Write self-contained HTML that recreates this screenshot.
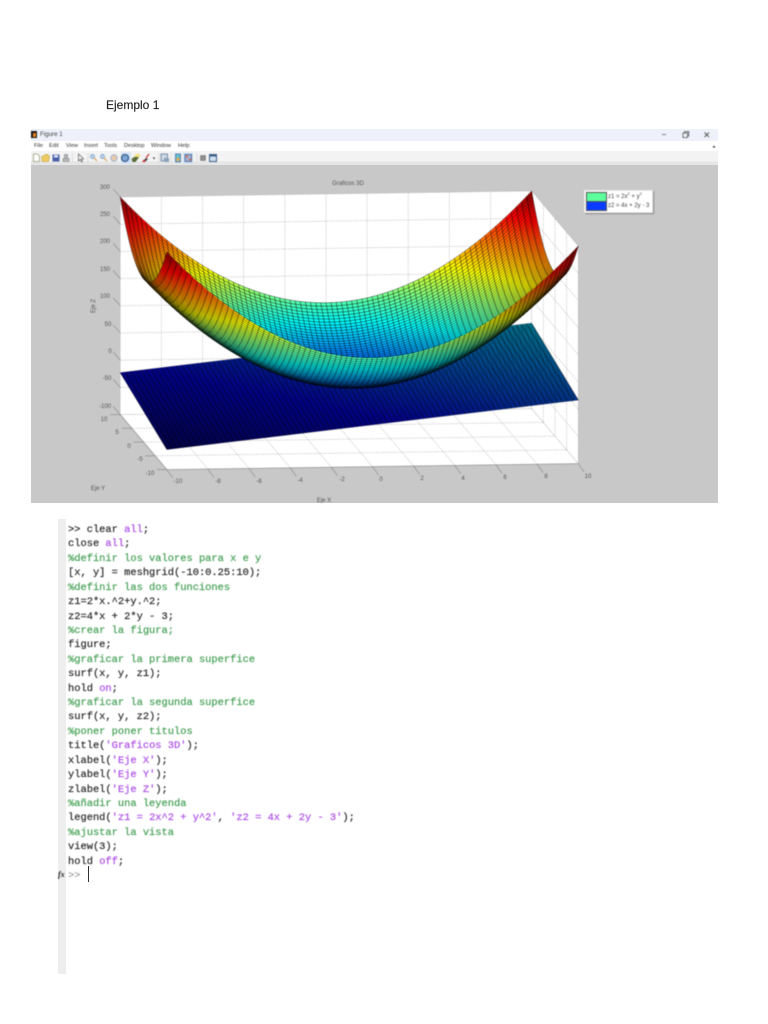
<!DOCTYPE html>
<html lang="es"><head><meta charset="utf-8"><title>Ejemplo 1</title>
<style>
html,body{margin:0;padding:0;background:#fff;width:768px;height:1024px;overflow:hidden}
body{position:relative;font-family:"Liberation Sans",sans-serif}
.a{position:absolute;white-space:pre}
#h{left:106px;top:98px;font-size:12px;line-height:15px;color:#222;-webkit-text-stroke:.15px #222}
#fig{position:absolute;left:31px;top:129px;width:687px;height:374px;background:#c8c8c8;overflow:hidden}
#tb{position:absolute;left:0;top:0;width:687px;height:12px;background:#eef1fa}
#mb{position:absolute;left:0;top:12px;width:687px;height:10px;background:#fff}
#too{position:absolute;left:0;top:22px;width:687px;height:14px;background:linear-gradient(#f3f3f3 0,#f3f3f3 75%,#e6e6e6 75%)}
#cv{position:absolute;left:0;top:0;width:768px;height:1024px;filter:blur(.4px)}
#over{position:absolute;left:0;top:0;width:768px;height:1024px;filter:blur(.5px)}
.m{font-size:5.6px;line-height:8px;color:#333;top:142px}
.t{font-size:6px;line-height:8px;color:#555;transform:translate(-50%,-50%)}
#leg{position:absolute;left:584px;top:190px;width:67px;height:21px;background:#fff;border:1px solid #e8e8e8;box-shadow:1px 1px 1px #888}
#code{position:absolute;left:68px;top:523px;font:10.4px/14.42px "Liberation Mono",monospace;color:#2a2a2a;white-space:pre;filter:blur(.45px);-webkit-text-stroke:.2px currentColor}
#code i{font-style:normal;color:#45a056}
#code b{font-weight:normal;color:#ac4ee4}
#bar{position:absolute;left:58px;top:519px;width:8px;height:455px;background:#eeeeee}
#cur{position:absolute;left:87.5px;top:866px;width:1.5px;height:16px;background:#333}
</style></head><body>
<div id="h" class="a">Ejemplo 1</div>
<div id="fig"><div id="tb"></div><div id="mb"></div><div id="too"></div></div>
<canvas id="cv" width="1536" height="2048"></canvas>
<div id="over">
<svg style="position:absolute;left:0;top:0" width="768" height="200">
<rect x="31" y="131" width="6" height="7" fill="#1a1a1a"/><rect x="33" y="133" width="3" height="4" fill="#e8801a"/>
<path d="M662 134.500h4" stroke="#666" stroke-width=".8"/>
<path d="M683 133h4.500v4.500h-4.500zM684.500 133v-1.300h4.300v4.300h-1.300" fill="none" stroke="#555" stroke-width=".8"/>
<path d="M704.500 132.500l4.500 4.500M709 132.500l-4.500 4.500" stroke="#555" stroke-width=".9"/>
<path d="M712.500 147.500h3l-1.500-2z" fill="#333"/>
<!-- toolbar -->
<rect x="121" y="152.500" width="10" height="11" fill="#cfe3f5"/><rect x="183" y="152.500" width="10" height="11" fill="#cfe3f5"/><rect x="173.500" y="152.500" width="9" height="11" fill="#e6eef5"/>
<path d="M33.500 154h4l2 2v5.500h-6z" fill="#fff" stroke="#9a9a7a" stroke-width=".8"/>
<path d="M42 156h2l1-1.500h3v1.500h1.500l-1 5.500H42z" fill="#f0cc60" stroke="#b8953a" stroke-width=".6"/>
<rect x="52.500" y="154.500" width="7" height="7" fill="#4a5fa8"/><rect x="54" y="155" width="4" height="2.500" fill="#dfe6f7"/>
<path d="M63 158.500h6v3h-6zM64.500 158.500v-4h3v4" fill="#b9bdc0" stroke="#777" stroke-width=".6"/>
<path d="M78.500 154v7l1.700-1.600 1.300 2.600 1-.5-1.200-2.500h2.200z" fill="#fff" stroke="#444" stroke-width=".6"/>
<path d="M72.500 153v10M88 153v10M159 153v10M171 153v10M197 153v10" stroke="#d6d6d6" stroke-width=".8"/>
<circle cx="92.500" cy="156.500" r="2" fill="#bcd4ec" stroke="#6b90bb" stroke-width=".7"/><path d="M94 158l3 3" stroke="#d9a24a" stroke-width="1.200"/>
<circle cx="102.500" cy="156.500" r="2" fill="#bcd4ec" stroke="#6b90bb" stroke-width=".7"/><path d="M104 158l3 3" stroke="#d9a24a" stroke-width="1.200"/>
<circle cx="114" cy="158" r="3.200" fill="#eac9a8" stroke="#9db4d2" stroke-width="1"/>
<circle cx="125" cy="158" r="3.500" fill="#7fa8d5" stroke="#2c4f80" stroke-width="1.100"/>
<path d="M131.500 159l4-3h3v2l-3 4h-3z" fill="#5b6a3a"/><rect x="135" y="154" width="5" height="3" fill="#f2e27d"/>
<path d="M142 162l4-4 2 1-3 3z" fill="#444"/><path d="M146 158l3-4" stroke="#c33" stroke-width="1.200"/><circle cx="144" cy="161" r="1.200" fill="#d33"/>
<path d="M152.500 157.500h3l-1.500 2z" fill="#555"/>
<rect x="161" y="154" width="6.500" height="7" fill="#cfd8e4" stroke="#5d7997" stroke-width=".8"/><rect x="164" y="158" width="5" height="4" fill="#8ba0b8"/>
<rect x="175.500" y="154" width="5" height="8" fill="#5fc0d0" stroke="#5b6f9c" stroke-width=".8"/><rect x="176.500" y="158" width="3" height="3" fill="#eba94e"/>
<rect x="185" y="154.500" width="6.500" height="7" fill="#9fb3d6" stroke="#43598c" stroke-width=".8"/><rect x="186" y="155.500" width="2" height="2" fill="#e06b5b"/><rect x="189" y="158.500" width="2" height="2" fill="#e06b5b"/>
<rect x="200.500" y="155.500" width="5" height="5" fill="#8f8f8f" stroke="#666" stroke-width=".5"/>
<rect x="209.500" y="154.500" width="7" height="7" fill="#cfe0f0" stroke="#3e5f8a" stroke-width="1"/><rect x="209.500" y="154.500" width="7" height="2" fill="#3e5f8a"/>
</svg>
<div class="a" style="left:40px;top:131px;font-size:6.2px;line-height:8px;color:#444">Figure 1</div>
<div class="a m" style="left:34px">File</div><div class="a m" style="left:49px">Edit</div><div class="a m" style="left:66px">View</div><div class="a m" style="left:84px">Insert</div><div class="a m" style="left:104px">Tools</div><div class="a m" style="left:124px">Desktop</div><div class="a m" style="left:151px">Window</div><div class="a m" style="left:178px">Help</div>
<div class="a t" style="left:348px;top:184px">Graficos 3D</div>
<div class="a t" style="left:105px;top:188px">300</div><div class="a t" style="left:105px;top:215px">250</div><div class="a t" style="left:105px;top:242px">200</div><div class="a t" style="left:105px;top:270px">150</div><div class="a t" style="left:105px;top:297px">100</div><div class="a t" style="left:108px;top:325px">50</div><div class="a t" style="left:110px;top:352px">0</div><div class="a t" style="left:107px;top:379px">-50</div><div class="a t" style="left:105px;top:407px">-100</div>
<div class="a t" style="left:104px;top:420px">10</div><div class="a t" style="left:117px;top:433px">5</div><div class="a t" style="left:129px;top:447px">0</div><div class="a t" style="left:140px;top:460px">-5</div><div class="a t" style="left:150px;top:474px">-10</div>
<div class="a t" style="left:178px;top:482px">-10</div><div class="a t" style="left:218px;top:482px">-8</div><div class="a t" style="left:259px;top:482px">-6</div><div class="a t" style="left:300px;top:481px">-4</div><div class="a t" style="left:342px;top:480px">-2</div><div class="a t" style="left:381px;top:480px">0</div><div class="a t" style="left:422px;top:479px">2</div><div class="a t" style="left:463px;top:479px">4</div><div class="a t" style="left:505px;top:478px">6</div><div class="a t" style="left:546px;top:477px">8</div><div class="a t" style="left:588px;top:477px">10</div>
<div class="a t" style="left:98px;top:489px">Eje Y</div>
<div style="position:absolute;left:300px;top:480px;width:60px;height:23px;overflow:hidden"><div class="a t" style="left:24px;top:21px">Eje X</div></div>
<div class="a t" style="left:94px;top:306px;transform:translate(-50%,-50%) rotate(-90deg)">Eje Z</div>
<div id="leg">
<div style="position:absolute;left:2px;top:2px;width:19px;height:8px;background:#5cff9c;outline:.5px solid #555"></div>
<div style="position:absolute;left:2px;top:11px;width:19px;height:8px;background:#0a3cff;outline:.5px solid #555"></div>
<div class="a" style="left:23px;top:1px;font-size:6px;line-height:10px;color:#444">z1 = 2x<sup style="font-size:4px;line-height:0">2</sup> + y<sup style="font-size:4px;line-height:0">2</sup></div>
<div class="a" style="left:23px;top:10px;font-size:6px;line-height:10px;color:#444">z2 = 4x + 2y - 3</div>
</div>
</div>
<div id="bar"></div>
<div id="code">&gt;&gt; clear <b>all</b>;
close <b>all</b>;
<i>%definir los valores para x e y</i>
[x, y] = meshgrid(-10:0.25:10);
<i>%definir las dos funciones</i>
z1=2*x.^2+y.^2;
z2=4*x + 2*y - 3;
<i>%crear la figura;</i>
figure;
<i>%graficar la primera superfice</i>
surf(x, y, z1);
hold <b>on</b>;
<i>%graficar la segunda superfice</i>
surf(x, y, z2);
<i>%poner poner titulos</i>
title(<b>'Graficos 3D'</b>);
xlabel(<b>'Eje X'</b>);
ylabel(<b>'Eje Y'</b>);
zlabel(<b>'Eje Z'</b>);
<i>%añadir una leyenda</i>
legend(<b>'z1 = 2x^2 + y^2'</b>, <b>'z2 = 4x + 2y - 3'</b>);
<i>%ajustar la vista</i>
view(3);
hold <b>off</b>;
<span style="color:#888;-webkit-text-stroke:0">&gt;&gt;</span></div>
<div class="a" style="left:58px;top:870px;font:bold 8px/9px 'Liberation Serif',serif;color:#222;filter:blur(.6px)"><span style="font-style:italic">fx</span></div>
<div id="cur"></div>
<script>
(function(){
var c=document.getElementById('cv').getContext('2d');c.scale(2,2);
function P(x,y,z){return [349.25+20.57*x-2.33*y,221.5+(300-z)*.544-.3*x-2.75*y];}
function L(a,b){c.beginPath();c.moveTo(a[0],a[1]);c.lineTo(b[0],b[1]);c.stroke();}
c.fillStyle='#fff';c.beginPath();
[[-10,10,300],[10,10,300],[10,-10,300],[10,-10,-100],[-10,-10,-100],[-10,10,-100]].forEach(function(p,i){var q=P(p[0],p[1],p[2]);i?c.lineTo(q[0],q[1]):c.moveTo(q[0],q[1]);});
c.closePath();c.fill();
c.strokeStyle='#a0a0a0';c.lineWidth=.65;c.setLineDash([1,1.4]);
var i,j,v;
for(v=-10;v<=10;v+=2){L(P(v,10,-100),P(v,10,300));L(P(v,-10,-100),P(v,10,-100));}
for(v=-100;v<=300;v+=50){L(P(-10,10,v),P(10,10,v));L(P(10,-10,v),P(10,10,v));}
for(v=-10;v<=10;v+=5){L(P(10,v,-100),P(10,v,300));L(P(-10,v,-100),P(10,v,-100));}
c.setLineDash([]);c.strokeStyle='#808080';c.lineWidth=.55;
L(P(-10,-10,-100),P(10,-10,-100));L(P(-10,-10,-100),P(-10,10,-100));
for(v=-100;v<=300;v+=50){var a=P(-10,10,v);L(a,[a[0]-7,a[1]-8]);}
for(v=-10;v<=10;v+=5){var b=P(-10,v,-100);L(b,[b[0]-10,b[1]]);}
for(v=-10;v<=10;v+=2){var d=P(v,-10,-100);L(d,[d[0]+6,d[1]+8.500]);}
function jet(t){
 function f(u){return Math.max(0,Math.min(1,1.5-Math.abs(4*t-u)));}
 return 'rgb('+Math.round(255*f(3))+','+Math.round(255*f(2))+','+Math.round(255*f(1))+')';
}
var qs=[],N=80,h=.25;
function z1(x,y){return 2*x*x+y*y;}
function z2(x,y){return 4*x+2*y-3;}
[z1,z2].forEach(function(F,idx){
 for(i=0;i<N;i++)for(j=0;j<N;j++){
  var x=-10+i*h,y=-10+j*h,X=x+h,Y=y+h;
  var za=F(x,y),zb=F(X,y),zc=F(X,Y),zd=F(x,Y),m=(za+zb+zc+zd)/4;
  qs.push({w:idx?.5:.42,p:[P(x,y,za),P(X,y,zb),P(X,Y,zc),P(x,Y,zd)],t:(m+63)/363,k:-1.267*(x+h/2)-11.19*(y+h/2)+57.3*m});
 }
});
qs.sort(function(a,b){return a.k-b.k;});
c.lineJoin='round';
qs.forEach(function(q){
 var p=q.p,col=jet(q.t);
 c.beginPath();c.moveTo(p[0][0],p[0][1]);c.lineTo(p[1][0],p[1][1]);c.lineTo(p[2][0],p[2][1]);c.lineTo(p[3][0],p[3][1]);c.closePath();
 c.fillStyle=col;c.fill();
 c.strokeStyle='rgba(0,0,0,.85)';c.lineWidth=q.w;c.stroke();
});
})();
</script>
</body></html>
